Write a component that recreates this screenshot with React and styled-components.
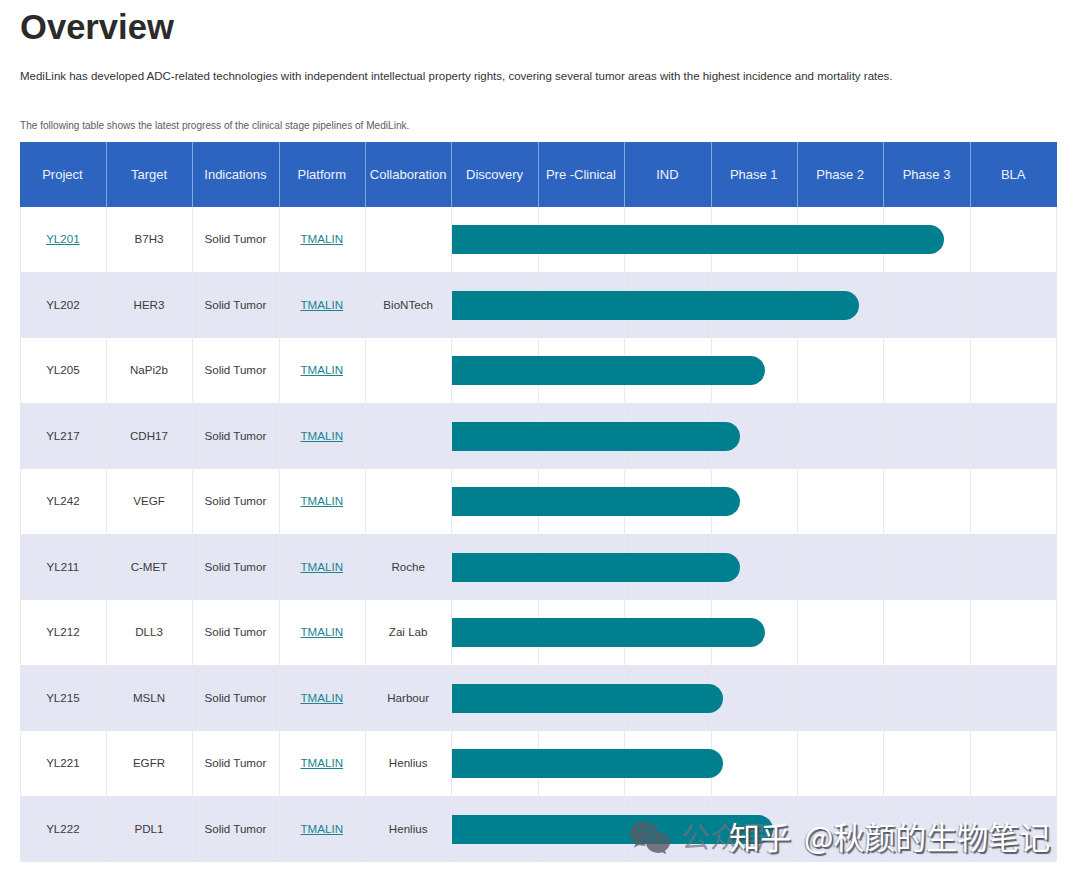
import React from 'react'
import styled, { createGlobalStyle } from 'styled-components'
import { FaWeixin } from 'react-icons/fa'

const columns = ['Project', 'Target', 'Indications', 'Platform', 'Collaboration', 'Discovery', 'Pre -Clinical', 'IND', 'Phase 1', 'Phase 2', 'Phase 3', 'BLA']

const rows = [
    { project: 'YL201', target: 'B7H3', partner: '', bar: 492, linked: true },
    { project: 'YL202', target: 'HER3', partner: 'BioNTech', bar: 407 },
    { project: 'YL205', target: 'NaPi2b', partner: '', bar: 313 },
    { project: 'YL217', target: 'CDH17', partner: '', bar: 288 },
    { project: 'YL242', target: 'VEGF', partner: '', bar: 288 },
    { project: 'YL211', target: 'C-MET', partner: 'Roche', bar: 288 },
    { project: 'YL212', target: 'DLL3', partner: 'Zai Lab', bar: 313 },
    { project: 'YL215', target: 'MSLN', partner: 'Harbour', bar: 271 },
    { project: 'YL221', target: 'EGFR', partner: 'Henlius', bar: 271 },
    { project: 'YL222', target: 'PDL1', partner: 'Henlius', bar: 321 },
]

const gridColumns = '85.8px repeat(10, 86.4px) 87px'

const App = () => (
    <Page>
        <GlobalStyle />
        <Title>Overview</Title>
        <Intro>MediLink has developed ADC-related technologies with independent intellectual property rights, covering several tumor areas with the highest incidence and mortality rates.</Intro>
        <Caption>The following table shows the latest progress of the clinical stage pipelines of MediLink.</Caption>
        <Table>
            <HeadRow>
                {columns.map((name) => <HeadCell key={name}>{name}</HeadCell>)}
            </HeadRow>
            {rows.map((row, index) => (
                <Row key={row.project} $striped={index % 2 === 1}>
                    <Cell>{row.linked ? <TealLink href="#">{row.project}</TealLink> : row.project}</Cell>
                    <Cell>{row.target}</Cell>
                    <Cell>Solid Tumor</Cell>
                    <Cell><TealLink href="#">TMALIN</TealLink></Cell>
                    <Cell>{row.partner}</Cell>
                    {columns.slice(5).map((name) => <Cell key={name} />)}
                    <Bar $width={row.bar} />
                </Row>
            ))}
        </Table>
        <Watermark>
            <WeChatMark><FaWeixin /></WeChatMark>
            <WeChatName>公众号</WeChatName>
            <ZhihuName>知乎 @秋颜的生物笔记</ZhihuName>
        </Watermark>
    </Page>
)

const GlobalStyle = createGlobalStyle`
    html, body {
        margin: 0;
        background: #fff;
    }
    body {
        font-family: "Liberation Sans", Arial, sans-serif;
    }
`

const Page = styled.div`
    position: relative;
    width: 1080px;
    height: 883px;
    padding: 0 23px 0 20px;
    box-sizing: border-box;
    overflow: hidden;
`

const Title = styled.h1`
    margin: 0;
    padding-top: 7px;
    font-size: 34.6px;
    line-height: 40px;
    font-weight: 700;
    color: #2b2b2b;
`

const Intro = styled.p`
    margin: 21px 0 0;
    font-size: 11.5px;
    line-height: 16px;
    color: #333;
`

const Caption = styled.p`
    margin: 36px 0 0;
    font-size: 10.08px;
    line-height: 12px;
    color: #5c5c5c;
`

const Table = styled.div`
    margin-top: 10px;
    width: 1037px;
`

const HeadRow = styled.div`
    display: grid;
    grid-template-columns: ${gridColumns};
    height: 64.8px;
    background: #2d64c0;
`

const HeadCell = styled.div`
    display: flex;
    align-items: center;
    justify-content: center;
    padding-right: 1px;
    font-size: 13px;
    white-space: nowrap;
    color: #eef2fa;
    & + & {
        border-left: 1px solid #86a8e0;
    }
`

const Row = styled.div`
    position: relative;
    display: grid;
    grid-template-columns: ${gridColumns};
    height: 65.5px;
    background: ${(props) => (props.$striped ? '#e4e6f3' : '#fff')};
`

const Cell = styled.div`
    display: flex;
    align-items: center;
    justify-content: center;
    padding: 0 1px 2px 0;
    font-size: 11.6px;
    color: #3a3a3a;
    border-left: 1px solid #e9e9ee;
    &:nth-child(12) {
        border-right: 1px solid #e9e9ee;
    }
`

const TealLink = styled.a`
    color: #1a8490;
    text-decoration: underline;
`

const Bar = styled.div`
    position: absolute;
    left: 432px;
    top: 18.4px;
    width: ${(props) => props.$width}px;
    height: 29px;
    background: #007f8f;
    border-radius: 0 15px 15px 0;
`

const Watermark = styled.div`
    position: absolute;
    left: 629px;
    top: 815px;
    display: flex;
    align-items: center;
    height: 40px;
`

const WeChatMark = styled.span`
    display: flex;
    margin-top: 5px;
    font-size: 42px;
    color: rgba(85, 90, 100, 0.8);
`

const WeChatName = styled.span`
    margin-left: 10px;
    width: 48px;
    font-family: "Noto Sans CJK SC", sans-serif;
    font-size: 29px;
    white-space: nowrap;
    color: rgba(110, 115, 125, 0.7);
`

const ZhihuName = styled.span`
    font-family: "Noto Sans CJK SC", sans-serif;
    font-size: 31px;
    word-spacing: 6px;
    white-space: nowrap;
    color: #fff;
    text-shadow: 2px 2px 1px rgba(70, 70, 80, 0.85), -1px 1px 1px rgba(90, 95, 105, 0.6);
`

export default App
